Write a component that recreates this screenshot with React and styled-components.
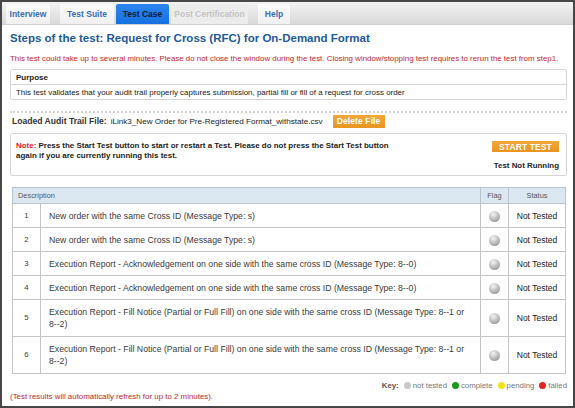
import React from 'react'
import styled, {createGlobalStyle} from 'styled-components'

const GlobalStyle = createGlobalStyle`
	html, body {
		margin: 0;
		padding: 0;
		background: #fff;
		font-family: "Liberation Sans", Arial, sans-serif;
	}
`

const Frame = styled.div`
	width: 575px;
	height: 408px;
	box-sizing: border-box;
	border: 2px solid #474747;
	background: #fff;
	overflow: hidden;
`

const TabBar = styled.div`
	height: 23px;
	display: flex;
	align-items: flex-end;
	padding-left: 2px;
	background: linear-gradient(#f3f3f3, #d9d9d9);
	border-bottom: 1px solid #d0d0d0;
	box-sizing: border-box;
`

const Tab = styled.div`
	width: ${p => p.$w}px;
	margin-left: ${p => p.$gap}px;
	height: 20px;
	display: flex;
	align-items: center;
	justify-content: center;
	font-size: 8.5px;
	font-weight: bold;
	border-radius: 2px 2px 0 0;
	box-sizing: border-box;
	color: ${p => p.$active ? '#0e1a30' : p.$disabled ? '#c4c4c4' : '#3a6db3'};
	background: ${p => p.$active ? 'linear-gradient(#2c86f0, #1770e0)' : p.$disabled ? '#ececec' : 'linear-gradient(#fbfbfb, #f0f0f0)'};
`

const Content = styled.div`
	padding: 0 6px 0 8px;
`

const Title = styled.h1`
	margin: 6px 0 0;
	font-size: 11.5px;
	line-height: 14px;
	font-weight: bold;
	color: #22599a;
`

const Warning = styled.p`
	margin: 8px 0 0;
	font-size: 7.9px;
	line-height: 11px;
	color: #c1272d;
	white-space: nowrap;
`

const Box = styled.div`
	margin-top: ${p => p.$mt}px;
	border: 1px solid #d6d6d6;
	border-radius: 2px;
	box-sizing: border-box;
`

const BoxHead = styled.div`
	height: 14px;
	padding-left: 5px;
	display: flex;
	align-items: center;
	border-bottom: 1px solid #d6d6d6;
	font-size: 8px;
	font-weight: bold;
	color: #222;
`

const BoxText = styled.div`
	height: 14px;
	padding-left: 5px;
	display: flex;
	align-items: center;
	font-size: 7.95px;
	color: #222;
`

const Separator = styled.div`
	margin-top: 11px;
	border-top: 2px dotted #d2d2d2;
`

const FileRow = styled.div`
	margin-top: 1px;
	height: 14px;
	display: flex;
	align-items: center;
	padding-left: 2px;
`

const FileLabel = styled.span`
	font-size: 8.6px;
	font-weight: bold;
	color: #333;
`

const FileName = styled.span`
	margin-left: 4px;
	font-size: 8.1px;
	color: #222;
`

const OrangeButton = styled.div`
	margin-left: ${p => p.$ml || 0}px;
	width: ${p => p.$w}px;
	height: ${p => p.$h}px;
	display: flex;
	align-items: center;
	justify-content: center;
	background: linear-gradient(#f2a83a, #e9951f);
	color: #fff;
	font-size: 8.5px;
	font-weight: bold;
	letter-spacing: 0.1px;
`

const NoteBox = styled(Box)`
	height: 43px;
	display: flex;
	justify-content: space-between;
	padding: 7px 7px 0 5px;
`

const NoteText = styled.div`
	font-size: 7.95px;
	line-height: 9.5px;
	font-weight: bold;
	color: #222;

	b {
		color: #e3262c;
	}
`

const NoteSide = styled.div`
	display: flex;
	flex-direction: column;
	align-items: flex-end;
`

const RunState = styled.div`
	margin-top: 9px;
	font-size: 7.9px;
	font-weight: bold;
	color: #222;
`

const Table = styled.table`
	margin: 11px 2px 0;
	width: 553px;
	border-collapse: collapse;
	table-layout: fixed;
	border: 1px solid #aab6c2;
	color: #333;
`

const HeadCell = styled.th`
	height: 15px;
	padding: 0 ${p => p.$left ? 5 : 0}px;
	background: #dbe8f2;
	border: 1px solid #b9c6d1;
	font-weight: normal;
	font-size: 7.4px;
	color: #555;
	text-align: ${p => p.$left ? 'left' : 'center'};
`

const Cell = styled.td`
	height: ${p => p.$tall ? 36 : 23}px;
	padding: 0 ${p => p.$left ? 8 : 0}px;
	border: 1px solid #c4c4c4;
	text-align: ${p => p.$left ? 'left' : 'center'};
	line-height: 12px;
	color: ${p => p.$dark ? '#222' : '#3a3a3a'};
	font-size: ${p => p.$size || 8.7}px;
`

const Ball = styled.span`
	display: inline-block;
	width: 11px;
	height: 11px;
	border-radius: 50%;
	vertical-align: middle;
	background: radial-gradient(circle at 40% 30%, #f4f4f4, #bdbdbd 50%, #828282);
`

const KeyRow = styled.div`
	margin-top: 6px;
	height: 10px;
	display: flex;
	justify-content: flex-end;
	align-items: center;
	gap: 5px;
	font-size: 7.8px;
	color: #777;
`

const KeyLabel = styled.span`
	font-weight: bold;
	color: #555;
`

const KeyItem = styled.span`
	display: flex;
	align-items: center;
	gap: 2px;
`

const Dot = styled.span`
	width: 7px;
	height: 7px;
	border-radius: 50%;
	background: ${p => p.$c};
`

const Footer = styled.p`
	margin: 2px 0 0;
	font-size: 7.9px;
	line-height: 10px;
	color: #c1272d;
`

const tabs = [
	{label: 'Interview', w: 44, gap: 2},
	{label: 'Test Suite', w: 54, gap: 10},
	{label: 'Test Case', w: 53, gap: 2, active: true},
	{label: 'Post Certification', w: 77, gap: 2, disabled: true},
	{label: 'Help', w: 32, gap: 10},
]

const fillText = ['Execution Report - Fill Notice (Partial or Full Fill) on one side with the same cross ID (Message Type: 8--1 or', '8--2)']
const ackText = ['Execution Report - Acknowledgement on one side with the same cross ID (Message Type: 8--0)']
const newText = ['New order with the same Cross ID (Message Type: s)']

const steps = [newText, newText, ackText, ackText, fillText, fillText]

const keys = [
	{label: 'not tested', c: '#c8c8c8'},
	{label: 'complete', c: '#1a9a1a'},
	{label: 'pending', c: '#f2e21a'},
	{label: 'failed', c: '#e0261f'},
]

export default function App() {
	return (
		<Frame>
			<GlobalStyle/>
			<TabBar>
				{tabs.map(t => (
					<Tab key={t.label} $w={t.w} $gap={t.gap} $active={t.active} $disabled={t.disabled}>{t.label}</Tab>
				))}
			</TabBar>
			<Content>
				<Title>Steps of the test: Request for Cross (RFC) for On-Demand Format</Title>
				<Warning>This test could take up to several minutes. Please do not close the window during the test. Closing window/stopping test requires to rerun the test from step1.</Warning>

				<Box $mt={5}>
					<BoxHead>Purpose</BoxHead>
					<BoxText>This test validates that your audit trail properly captures submission, partial fill or fill of a request for cross order</BoxText>
				</Box>

				<Separator/>

				<FileRow>
					<FileLabel>Loaded Audit Trail File:</FileLabel>
					<FileName>iLink3_New Order for Pre-Registered Format_withstate.csv</FileName>
					<OrangeButton $ml={10} $w={52} $h={13}>Delete File</OrangeButton>
				</FileRow>

				<NoteBox $mt={5}>
					<NoteText>
						<b>Note:</b> Press the Start Test button to start or restart a Test. Please do not press the Start Test button<br/>
						again if you are currently running this test.
					</NoteText>
					<NoteSide>
						<OrangeButton $w={67} $h={11}>START TEST</OrangeButton>
						<RunState>Test Not Running</RunState>
					</NoteSide>
				</NoteBox>

				<Table>
					<colgroup>
						<col style={{width: 28}}/>
						<col style={{width: 440}}/>
						<col style={{width: 28}}/>
						<col style={{width: 57}}/>
					</colgroup>
					<thead>
						<tr>
							<HeadCell $left colSpan={2}>Description</HeadCell>
							<HeadCell>Flag</HeadCell>
							<HeadCell>Status</HeadCell>
						</tr>
					</thead>
					<tbody>
						{steps.map((lines, i) => (
							<tr key={i}>
								<Cell $tall={lines.length > 1} $size={7.8}>{i + 1}</Cell>
								<Cell $left $tall={lines.length > 1}>
									{lines.map((l, j) => <React.Fragment key={j}>{j > 0 && <br/>}{l}</React.Fragment>)}
								</Cell>
								<Cell><Ball/></Cell>
								<Cell $dark $size={8.5}>Not Tested</Cell>
							</tr>
						))}
					</tbody>
				</Table>

				<KeyRow>
					<KeyLabel>Key:</KeyLabel>
					{keys.map(k => (
						<KeyItem key={k.label}><Dot $c={k.c}/>{k.label}</KeyItem>
					))}
				</KeyRow>

				<Footer>(Test results will automatically refresh for up to 2 minutes).</Footer>
			</Content>
		</Frame>
	)
}
